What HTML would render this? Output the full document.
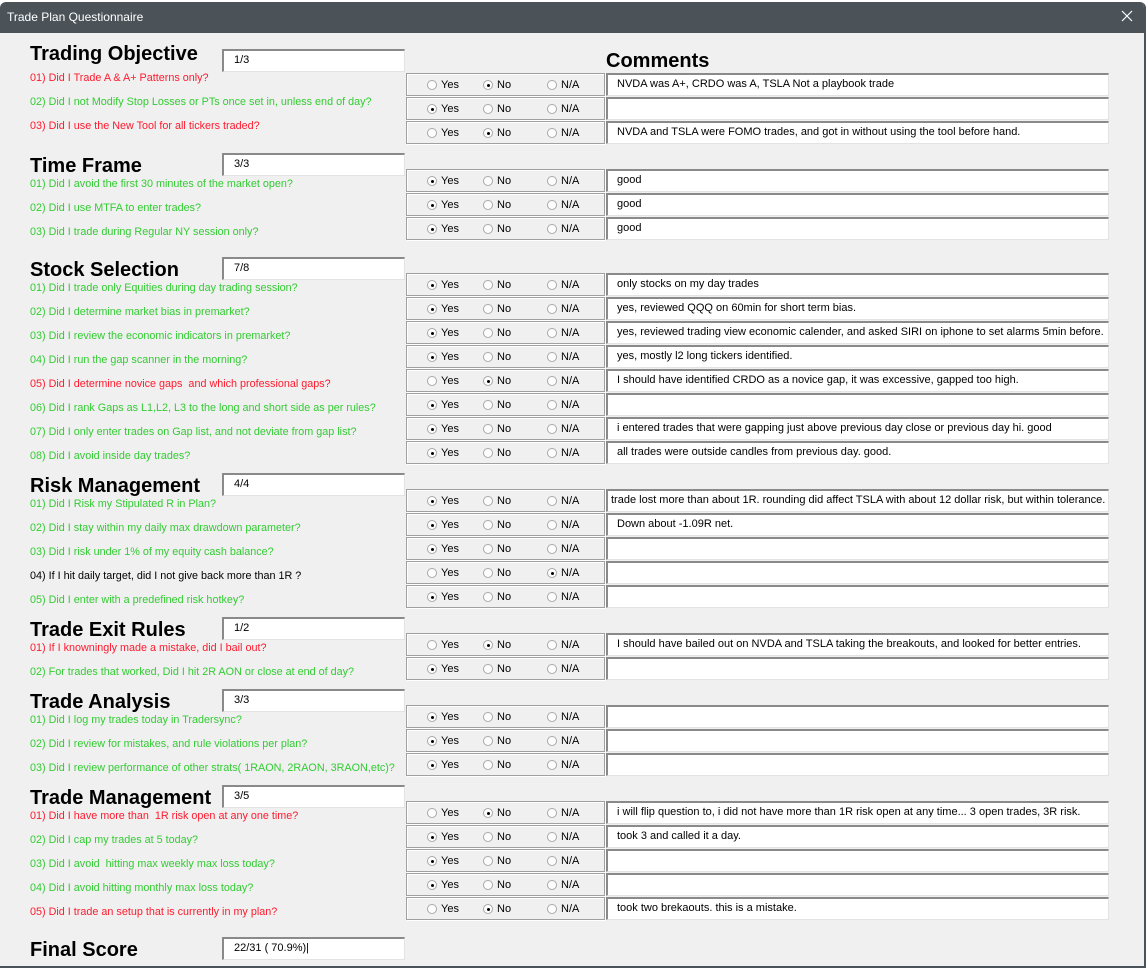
<!DOCTYPE html>
<html><head><meta charset="utf-8"><style>
*{margin:0;padding:0;box-sizing:border-box}
html,body{width:1147px;height:970px;overflow:hidden;background:#fff;font-family:"Liberation Sans",sans-serif}
.win{position:absolute;left:0;top:2px;width:1146px;height:966px;background:#f0f0f0;border-right:2px solid #4b5359;border-bottom:2px solid #4b5359;border-radius:6px 6px 0 0;overflow:hidden}
.tb{position:absolute;left:0;top:0;width:100%;height:31px;background:#4b5359;color:#fff;font-size:12px;line-height:31px;padding-left:7px}
.x{position:absolute;right:10px;top:7px;width:14px;height:14px}
.h{position:absolute;left:30px;font-weight:bold;font-size:20px;color:#000;line-height:22px}
.hb{position:absolute;left:222px;width:183px;height:23px;background:#fff;border-top:2px solid #8a8a8a;border-left:2px solid #8a8a8a;border-right:1px solid #e3e3e3;border-bottom:1px solid #e3e3e3;font-size:11px;line-height:19px;padding-left:10px}
.r{position:absolute;left:0;width:1147px;height:23px}
.l{position:absolute;left:30px;top:9px;font-size:10.8px;line-height:12px;white-space:nowrap}
.o .l{top:-1px}
.R{color:#ff1a2e}.G{color:#33cc33}.B{color:#000}
.g{position:absolute;left:406px;top:0;width:199px;height:23px;border:1px solid #a0a0a0;box-shadow:inset 1px 1px #fff,1px 1px #fff;font-size:11px}
.c{position:absolute;top:6px;width:10px;height:10px;border-radius:50%;border:1px solid #a8a8a8;background:#fff}
.c.s::after{content:"";position:absolute;left:2.5px;top:2.5px;width:3px;height:3px;border-radius:50%;background:#000}
.t{position:absolute;top:5px;line-height:13px;color:#000}
.m{position:absolute;left:606px;top:0;width:503px;height:23px;background:#fff;border-top:2px solid #8a8a8a;border-left:2px solid #8a8a8a;border-right:1px solid #e3e3e3;border-bottom:1px solid #e3e3e3;font-size:11px;line-height:19px;padding-left:9px;white-space:nowrap;overflow:hidden}
</style></head><body>
<div class="win">
<div class="tb">Trade Plan Questionnaire<svg class="x" viewBox="0 0 14 14"><path d="M2 2L12 12M12 2L2 12" stroke="#fff" stroke-width="1.2"/></svg></div>
</div>
<div class="h" style="top:43px">Trading Objective</div><div class="hb" style="top:49px">1/3</div>
<div class="h" style="left:606px;top:50px">Comments</div>
<div class="h" style="top:155px">Time Frame</div><div class="hb" style="top:153px">3/3</div>
<div class="h" style="top:259px">Stock Selection</div><div class="hb" style="top:257px">7/8</div>
<div class="h" style="top:475px">Risk Management</div><div class="hb" style="top:473px">4/4</div>
<div class="h" style="top:619px">Trade Exit Rules</div><div class="hb" style="top:617px">1/2</div>
<div class="h" style="top:691px">Trade Analysis</div><div class="hb" style="top:689px">3/3</div>
<div class="h" style="top:787px">Trade Management</div><div class="hb" style="top:785px">3/5</div>
<div class="h" style="top:939px">Final Score</div><div class="hb" style="top:937px">22/31 ( 70.9%)|</div>

<div class="r o" style="top:73px"><div class="l R">01) Did I Trade A &amp; A+ Patterns only?</div><div class="g"><i class="c" style="left:20px"></i><span class="t" style="left:34px">Yes</span><i class="c s" style="left:76px"></i><span class="t" style="left:90px">No</span><i class="c" style="left:140px"></i><span class="t" style="left:154px">N/A</span></div><div class="m">NVDA was A+, CRDO was A, TSLA Not a playbook trade</div></div>
<div class="r o" style="top:97px"><div class="l G">02) Did I not Modify Stop Losses or PTs once set in, unless end of day?</div><div class="g"><i class="c s" style="left:20px"></i><span class="t" style="left:34px">Yes</span><i class="c" style="left:76px"></i><span class="t" style="left:90px">No</span><i class="c" style="left:140px"></i><span class="t" style="left:154px">N/A</span></div><div class="m"></div></div>
<div class="r o" style="top:121px"><div class="l R">03) Did I use the New Tool for all tickers traded?</div><div class="g"><i class="c" style="left:20px"></i><span class="t" style="left:34px">Yes</span><i class="c s" style="left:76px"></i><span class="t" style="left:90px">No</span><i class="c" style="left:140px"></i><span class="t" style="left:154px">N/A</span></div><div class="m">NVDA and TSLA were FOMO trades, and got in without using the tool before hand.</div></div>

<div class="r" style="top:169px"><div class="l G">01) Did I avoid the first 30 minutes of the market open?</div><div class="g"><i class="c s" style="left:20px"></i><span class="t" style="left:34px">Yes</span><i class="c" style="left:76px"></i><span class="t" style="left:90px">No</span><i class="c" style="left:140px"></i><span class="t" style="left:154px">N/A</span></div><div class="m">good</div></div>
<div class="r" style="top:193px"><div class="l G">02) Did I use MTFA to enter trades?</div><div class="g"><i class="c s" style="left:20px"></i><span class="t" style="left:34px">Yes</span><i class="c" style="left:76px"></i><span class="t" style="left:90px">No</span><i class="c" style="left:140px"></i><span class="t" style="left:154px">N/A</span></div><div class="m">good</div></div>
<div class="r" style="top:217px"><div class="l G">03) Did I trade during Regular NY session only?</div><div class="g"><i class="c s" style="left:20px"></i><span class="t" style="left:34px">Yes</span><i class="c" style="left:76px"></i><span class="t" style="left:90px">No</span><i class="c" style="left:140px"></i><span class="t" style="left:154px">N/A</span></div><div class="m">good</div></div>

<div class="r" style="top:273px"><div class="l G">01) Did I trade only Equities during day trading session?</div><div class="g"><i class="c s" style="left:20px"></i><span class="t" style="left:34px">Yes</span><i class="c" style="left:76px"></i><span class="t" style="left:90px">No</span><i class="c" style="left:140px"></i><span class="t" style="left:154px">N/A</span></div><div class="m">only stocks on my day trades</div></div>
<div class="r" style="top:297px"><div class="l G">02) Did I determine market bias in premarket?</div><div class="g"><i class="c s" style="left:20px"></i><span class="t" style="left:34px">Yes</span><i class="c" style="left:76px"></i><span class="t" style="left:90px">No</span><i class="c" style="left:140px"></i><span class="t" style="left:154px">N/A</span></div><div class="m">yes, reviewed QQQ on 60min for short term bias.</div></div>
<div class="r" style="top:321px"><div class="l G">03) Did I review the economic indicators in premarket?</div><div class="g"><i class="c s" style="left:20px"></i><span class="t" style="left:34px">Yes</span><i class="c" style="left:76px"></i><span class="t" style="left:90px">No</span><i class="c" style="left:140px"></i><span class="t" style="left:154px">N/A</span></div><div class="m">yes, reviewed trading view economic calender, and asked SIRI on iphone to set alarms 5min before.</div></div>
<div class="r" style="top:345px"><div class="l G">04) Did I run the gap scanner in the morning?</div><div class="g"><i class="c s" style="left:20px"></i><span class="t" style="left:34px">Yes</span><i class="c" style="left:76px"></i><span class="t" style="left:90px">No</span><i class="c" style="left:140px"></i><span class="t" style="left:154px">N/A</span></div><div class="m">yes, mostly l2 long tickers identified.</div></div>
<div class="r" style="top:369px"><div class="l R">05) Did I determine novice gaps&nbsp; and which professional gaps?</div><div class="g"><i class="c" style="left:20px"></i><span class="t" style="left:34px">Yes</span><i class="c s" style="left:76px"></i><span class="t" style="left:90px">No</span><i class="c" style="left:140px"></i><span class="t" style="left:154px">N/A</span></div><div class="m">I should have identified CRDO as a novice gap, it was excessive, gapped too high.</div></div>
<div class="r" style="top:393px"><div class="l G">06) Did I rank Gaps as L1,L2, L3 to the long and short side as per rules?</div><div class="g"><i class="c s" style="left:20px"></i><span class="t" style="left:34px">Yes</span><i class="c" style="left:76px"></i><span class="t" style="left:90px">No</span><i class="c" style="left:140px"></i><span class="t" style="left:154px">N/A</span></div><div class="m"></div></div>
<div class="r" style="top:417px"><div class="l G">07) Did I only enter trades on Gap list, and not deviate from gap list?</div><div class="g"><i class="c s" style="left:20px"></i><span class="t" style="left:34px">Yes</span><i class="c" style="left:76px"></i><span class="t" style="left:90px">No</span><i class="c" style="left:140px"></i><span class="t" style="left:154px">N/A</span></div><div class="m">i entered trades that were gapping just above previous day close or previous day hi. good</div></div>
<div class="r" style="top:441px"><div class="l G">08) Did I avoid inside day trades?</div><div class="g"><i class="c s" style="left:20px"></i><span class="t" style="left:34px">Yes</span><i class="c" style="left:76px"></i><span class="t" style="left:90px">No</span><i class="c" style="left:140px"></i><span class="t" style="left:154px">N/A</span></div><div class="m">all trades were outside candles from previous day. good.</div></div>

<div class="r" style="top:489px"><div class="l G">01) Did I Risk my Stipulated R in Plan?</div><div class="g"><i class="c s" style="left:20px"></i><span class="t" style="left:34px">Yes</span><i class="c" style="left:76px"></i><span class="t" style="left:90px">No</span><i class="c" style="left:140px"></i><span class="t" style="left:154px">N/A</span></div><div class="m" style="padding-left:3px">trade lost more than about 1R. rounding did affect TSLA with about 12 dollar risk, but within tolerance.</div></div>
<div class="r" style="top:513px"><div class="l G">02) Did I stay within my daily max drawdown parameter?</div><div class="g"><i class="c s" style="left:20px"></i><span class="t" style="left:34px">Yes</span><i class="c" style="left:76px"></i><span class="t" style="left:90px">No</span><i class="c" style="left:140px"></i><span class="t" style="left:154px">N/A</span></div><div class="m">Down about -1.09R net.</div></div>
<div class="r" style="top:537px"><div class="l G">03) Did I risk under 1% of my equity cash balance?</div><div class="g"><i class="c s" style="left:20px"></i><span class="t" style="left:34px">Yes</span><i class="c" style="left:76px"></i><span class="t" style="left:90px">No</span><i class="c" style="left:140px"></i><span class="t" style="left:154px">N/A</span></div><div class="m"></div></div>
<div class="r" style="top:561px"><div class="l B">04) If I hit daily target, did I not give back more than 1R ?</div><div class="g"><i class="c" style="left:20px"></i><span class="t" style="left:34px">Yes</span><i class="c" style="left:76px"></i><span class="t" style="left:90px">No</span><i class="c s" style="left:140px"></i><span class="t" style="left:154px">N/A</span></div><div class="m"></div></div>
<div class="r" style="top:585px"><div class="l G">05) Did I enter with a predefined risk hotkey?</div><div class="g"><i class="c s" style="left:20px"></i><span class="t" style="left:34px">Yes</span><i class="c" style="left:76px"></i><span class="t" style="left:90px">No</span><i class="c" style="left:140px"></i><span class="t" style="left:154px">N/A</span></div><div class="m"></div></div>

<div class="r" style="top:633px"><div class="l R">01) If I knowningly made a mistake, did I bail out?</div><div class="g"><i class="c" style="left:20px"></i><span class="t" style="left:34px">Yes</span><i class="c s" style="left:76px"></i><span class="t" style="left:90px">No</span><i class="c" style="left:140px"></i><span class="t" style="left:154px">N/A</span></div><div class="m">I should have bailed out on NVDA and TSLA taking the breakouts, and looked for better entries.</div></div>
<div class="r" style="top:657px"><div class="l G">02) For trades that worked, Did I hit 2R AON or close at end of day?</div><div class="g"><i class="c s" style="left:20px"></i><span class="t" style="left:34px">Yes</span><i class="c" style="left:76px"></i><span class="t" style="left:90px">No</span><i class="c" style="left:140px"></i><span class="t" style="left:154px">N/A</span></div><div class="m"></div></div>

<div class="r" style="top:705px"><div class="l G">01) Did I log my trades today in Tradersync?</div><div class="g"><i class="c s" style="left:20px"></i><span class="t" style="left:34px">Yes</span><i class="c" style="left:76px"></i><span class="t" style="left:90px">No</span><i class="c" style="left:140px"></i><span class="t" style="left:154px">N/A</span></div><div class="m"></div></div>
<div class="r" style="top:729px"><div class="l G">02) Did I review for mistakes, and rule violations per plan?</div><div class="g"><i class="c s" style="left:20px"></i><span class="t" style="left:34px">Yes</span><i class="c" style="left:76px"></i><span class="t" style="left:90px">No</span><i class="c" style="left:140px"></i><span class="t" style="left:154px">N/A</span></div><div class="m"></div></div>
<div class="r" style="top:753px"><div class="l G">03) Did I review performance of other strats( 1RAON, 2RAON, 3RAON,etc)?</div><div class="g"><i class="c s" style="left:20px"></i><span class="t" style="left:34px">Yes</span><i class="c" style="left:76px"></i><span class="t" style="left:90px">No</span><i class="c" style="left:140px"></i><span class="t" style="left:154px">N/A</span></div><div class="m"></div></div>

<div class="r" style="top:801px"><div class="l R">01) Did I have more than&nbsp; 1R risk open at any one time?</div><div class="g"><i class="c" style="left:20px"></i><span class="t" style="left:34px">Yes</span><i class="c s" style="left:76px"></i><span class="t" style="left:90px">No</span><i class="c" style="left:140px"></i><span class="t" style="left:154px">N/A</span></div><div class="m">i will flip question to, i did not have more than 1R risk open at any time... 3 open trades, 3R risk.</div></div>
<div class="r" style="top:825px"><div class="l G">02) Did I cap my trades at 5 today?</div><div class="g"><i class="c s" style="left:20px"></i><span class="t" style="left:34px">Yes</span><i class="c" style="left:76px"></i><span class="t" style="left:90px">No</span><i class="c" style="left:140px"></i><span class="t" style="left:154px">N/A</span></div><div class="m">took 3 and called it a day.</div></div>
<div class="r" style="top:849px"><div class="l G">03) Did I avoid&nbsp; hitting max weekly max loss today?</div><div class="g"><i class="c s" style="left:20px"></i><span class="t" style="left:34px">Yes</span><i class="c" style="left:76px"></i><span class="t" style="left:90px">No</span><i class="c" style="left:140px"></i><span class="t" style="left:154px">N/A</span></div><div class="m"></div></div>
<div class="r" style="top:873px"><div class="l G">04) Did I avoid hitting monthly max loss today?</div><div class="g"><i class="c s" style="left:20px"></i><span class="t" style="left:34px">Yes</span><i class="c" style="left:76px"></i><span class="t" style="left:90px">No</span><i class="c" style="left:140px"></i><span class="t" style="left:154px">N/A</span></div><div class="m"></div></div>
<div class="r" style="top:897px"><div class="l R">05) Did I trade an setup that is currently in my plan?</div><div class="g"><i class="c" style="left:20px"></i><span class="t" style="left:34px">Yes</span><i class="c s" style="left:76px"></i><span class="t" style="left:90px">No</span><i class="c" style="left:140px"></i><span class="t" style="left:154px">N/A</span></div><div class="m">took two brekaouts. this is a mistake.</div></div>
</body></html>
